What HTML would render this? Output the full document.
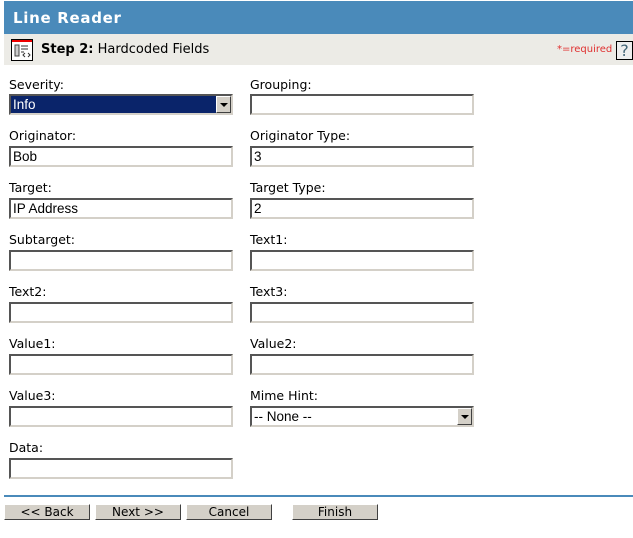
<!DOCTYPE html>
<html><head><meta charset="utf-8"><style>
*{margin:0;padding:0;box-sizing:border-box}
body{width:633px;height:538px;background:#fff;font-family:"DejaVu Sans","Liberation Sans",sans-serif;position:relative;overflow:hidden;color:#000}
.hdr{position:absolute;left:4px;top:1px;width:629px;height:33px;background:#4a8aba;color:#fff;font-weight:bold;font-size:15px;line-height:35px;padding-left:9px;letter-spacing:0.7px}
.bar{position:absolute;left:4px;top:34px;width:629px;height:31px;background:#ecebe6}
.lbl{position:absolute;font-size:12.5px}
.f{position:absolute;width:224px;height:21px;border:2px solid;border-color:#555 #d4d0c8 #d4d0c8 #555;background:#fff;font-family:"Liberation Sans",sans-serif;font-size:13.5px;line-height:17px;padding-left:2px}
.btn{position:absolute;top:504px;height:16px;width:86px;background:#d4d0c8;border:1px solid;border-color:#fff #404040 #404040 #fff;font-size:12px;line-height:14px;text-align:center}
.arr{position:absolute;right:0;top:0;width:15px;height:17px;background:#d4d0c8;border:1px solid;border-color:#fff #404040 #404040 #fff}
.arr:after{content:"";position:absolute;left:3px;top:6px;border-left:4px solid transparent;border-right:4px solid transparent;border-top:4px solid #000}
</style></head><body>
<div class="hdr">Line Reader</div>
<div class="bar">
<svg style="position:absolute;left:7px;top:5px" width="22" height="22" viewBox="0 0 22 22"><rect x="0.5" y="0.5" width="21" height="21" fill="#fff" stroke="#000"/><rect x="1" y="1" width="20" height="2" fill="#e00"/><rect x="4" y="6" width="4" height="11" fill="#ccc" stroke="#444"/><path d="M10 7h7M10 10h7M10 13h3M14 14l-2 2 2 2M17 14l2 2-2 2" stroke="#333" fill="none"/></svg>
<div style="position:absolute;left:37px;top:8px;font-size:13px"><b>Step 2:</b> Hardcoded Fields</div>
<div style="position:absolute;left:553px;top:10px;font-size:10px;color:#e03030">*=required</div>
<div style="position:absolute;left:612px;top:7px;width:17px;height:19px;border:1px solid #000;background:#eee;font-size:16px;line-height:17px;text-align:center;color:#467">?</div>
</div>

<div class="lbl" style="left:9px;top:77px">Severity:</div>
<div class="f" style="left:9px;top:94px;background:#0a246a;color:#fff;border-color:#555 #d4d0c8 #d4d0c8 #555">Info<div class="arr"></div></div>
<div class="lbl" style="left:250px;top:77px">Grouping:</div>
<div class="f" style="left:250px;top:94px"></div>

<div class="lbl" style="left:9px;top:128px">Originator:</div>
<div class="f" style="left:9px;top:146px">Bob</div>
<div class="lbl" style="left:250px;top:128px">Originator Type:</div>
<div class="f" style="left:250px;top:146px">3</div>

<div class="lbl" style="left:9px;top:180px">Target:</div>
<div class="f" style="left:9px;top:198px">IP Address</div>
<div class="lbl" style="left:250px;top:180px">Target Type:</div>
<div class="f" style="left:250px;top:198px">2</div>

<div class="lbl" style="left:9px;top:232px">Subtarget:</div>
<div class="f" style="left:9px;top:250px"></div>
<div class="lbl" style="left:250px;top:232px">Text1:</div>
<div class="f" style="left:250px;top:250px"></div>

<div class="lbl" style="left:9px;top:284px">Text2:</div>
<div class="f" style="left:9px;top:302px"></div>
<div class="lbl" style="left:250px;top:284px">Text3:</div>
<div class="f" style="left:250px;top:302px"></div>

<div class="lbl" style="left:9px;top:336px">Value1:</div>
<div class="f" style="left:9px;top:354px"></div>
<div class="lbl" style="left:250px;top:336px">Value2:</div>
<div class="f" style="left:250px;top:354px"></div>

<div class="lbl" style="left:9px;top:388px">Value3:</div>
<div class="f" style="left:9px;top:406px"></div>
<div class="lbl" style="left:250px;top:388px">Mime Hint:</div>
<div class="f" style="left:250px;top:406px">-- None --<div class="arr"></div></div>

<div class="lbl" style="left:9px;top:440px">Data:</div>
<div class="f" style="left:9px;top:458px"></div>

<div style="position:absolute;left:4px;top:495px;width:629px;height:2px;background:#4a8aba"></div>
<div class="btn" style="left:4px">&lt;&lt; Back</div>
<div class="btn" style="left:95px">Next &gt;&gt;</div>
<div class="btn" style="left:186px">Cancel</div>
<div class="btn" style="left:292px">Finish</div>
</body></html>
